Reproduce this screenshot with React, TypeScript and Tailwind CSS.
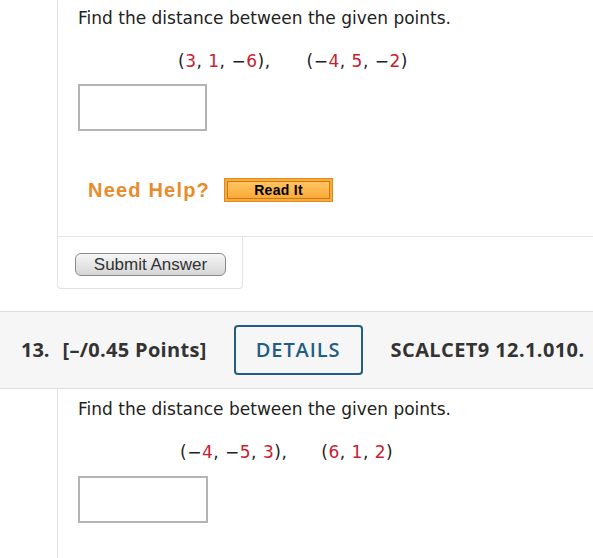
import React from "react";

const R = ({ children }: { children: React.ReactNode }) => (
  <span className="text-[#c8202f]">{children}</span>
);

export default function App() {
  return (
    <div className="w-[593px] h-[558px] overflow-hidden bg-white text-[#222]">
      {/* Top question panel */}
      <div className="ml-[57px] border-l border-[#e3e3e3]">
        <div className="pl-[20px] pt-[8px] h-[236px] text-[17px] leading-[20px] font-['DejaVu_Sans',sans-serif]">
          <div>Find the distance between the given points.</div>
          <div className="mt-[23px] pl-[100px] flex tracking-[0.5px]">
            <span>
              (<R>3</R>, <R>1</R>, −<R>6</R>),
            </span>
            <span className="ml-[36px]">
              (−<R>4</R>, <R>5</R>, −<R>2</R>)
            </span>
          </div>
          <div className="mt-[13px] w-[129px] h-[47px] border-2 border-[#b4b4b4] bg-white" />
          <div className="mt-[47px] ml-[10px] flex items-center h-[24px]">
            <span className="text-[20px] font-bold tracking-[1.2px] text-[#e98b2b] font-['Liberation_Sans',Arial,sans-serif] leading-none">
              Need Help?
            </span>
            <div className="ml-[14px] w-[109px] h-[24px] border border-[#e08a1e] bg-[#f8ab3c] p-[2px] flex">
              <div className="flex-1 border border-[#c97b16] bg-gradient-to-b from-[#ffc460] to-[#f9aa38] flex items-center justify-center">
                <span className="text-[14px] font-bold tracking-[0.3px] text-black font-['Liberation_Sans',Arial,sans-serif] leading-none">
                  Read It
                </span>
              </div>
            </div>
          </div>
        </div>
      </div>
      <div className="ml-[57px] border-t border-[#e3e3e3]" />
      {/* Submit tab */}
      <div className="ml-[57px] w-[186px] h-[52px] border-l border-r border-b border-[#e3e3e3] rounded-b-[4px] pl-[17px] pt-[16px]">
        <div className="w-[151px] h-[23px] rounded-[6px] border border-[#8a8a8a] bg-gradient-to-b from-[#f6f6f6] to-[#d6d6d6] flex items-center justify-center">
          <span className="text-[17px] leading-none text-[#333] font-['Liberation_Sans',Arial,sans-serif]">
            Submit Answer
          </span>
        </div>
      </div>
      {/* Header bar */}
      <div className="mt-[22px] h-[78px] border-t border-b border-[#dedede] bg-[#f6f6f6] flex items-center font-['Open_Sans',sans-serif] text-[#333]">
        <span className="ml-[21px] text-[20px] font-bold">13.</span>
        <span className="ml-[13px] text-[20px] font-bold tracking-[0.3px]">[–/0.45 Points]</span>
        <div className="ml-[27px] w-[129px] h-[50px] rounded-[4px] border-2 border-[#215e80] flex items-center justify-center">
          <span className="text-[20px] font-semibold tracking-[0.9px] text-[#1f5d85]">DETAILS</span>
        </div>
        <span className="ml-[28px] text-[20px] font-bold tracking-[0.4px]">SCALCET9 12.1.010.</span>
      </div>
      {/* Lower question panel */}
      <div className="ml-[57px] border-l border-[#e3e3e3] h-[200px]">
        <div className="pl-[20px] pt-[10px] text-[17px] leading-[20px] font-['DejaVu_Sans',sans-serif]">
          <div>Find the distance between the given points.</div>
          <div className="mt-[23px] pl-[102px] flex tracking-[0.5px]">
            <span>
              (−<R>4</R>, −<R>5</R>, <R>3</R>),
            </span>
            <span className="ml-[34px]">
              (<R>6</R>, <R>1</R>, <R>2</R>)
            </span>
          </div>
          <div className="mt-[14px] w-[130px] h-[47px] border-2 border-[#b4b4b4] bg-white" />
        </div>
      </div>
    </div>
  );
}
